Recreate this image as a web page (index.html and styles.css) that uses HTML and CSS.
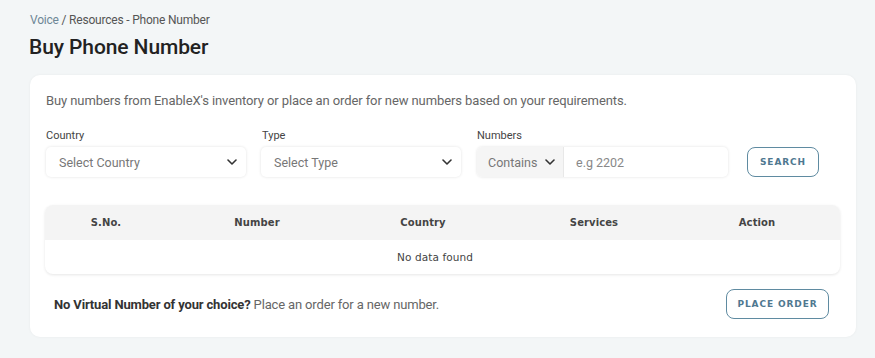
FILE: index.html
```html
<!DOCTYPE html>
<html>
<head>
<meta charset="utf-8">
<link rel="stylesheet" href="styles.css">
</head>
<body>
<div class="page">
  <div class="crumbs"><span class="crumb-link">Voice</span> / Resources - Phone Number</div>
  <h1 class="title">Buy Phone Number</h1>
  <div class="card">
    <p class="desc">Buy numbers from EnableX's inventory or place an order for new numbers based on your requirements.</p>
    <div class="filters">
      <div class="field">
        <label class="label">Country</label>
        <div class="select w200"><span>Select Country</span>
          <svg class="chev" viewBox="0 0 10 6" width="10" height="6"><path d="M1 1l4 4 4-4" fill="none" stroke="#333" stroke-width="1.6" stroke-linecap="round" stroke-linejoin="round"/></svg>
        </div>
      </div>
      <div class="field">
        <label class="label">Type</label>
        <div class="select w200"><span>Select Type</span>
          <svg class="chev" viewBox="0 0 10 6" width="10" height="6"><path d="M1 1l4 4 4-4" fill="none" stroke="#333" stroke-width="1.6" stroke-linecap="round" stroke-linejoin="round"/></svg>
        </div>
      </div>
      <div class="field">
        <label class="label">Numbers</label>
        <div class="numgroup">
          <div class="contains"><span>Contains</span>
            <svg class="chev" viewBox="0 0 10 6" width="10" height="6"><path d="M1 1l4 4 4-4" fill="none" stroke="#333" stroke-width="1.6" stroke-linecap="round" stroke-linejoin="round"/></svg>
          </div>
          <div class="numinput">e.g 2202</div>
        </div>
      </div>
      <button class="btn search">SEARCH</button>
    </div>
    <div class="table">
      <div class="thead">
        <div>S.No.</div><div>Number</div><div>Country</div><div>Services</div><div>Action</div><div></div>
      </div>
      <div class="tbody">No data found</div>
    </div>
    <div class="footer">
      <p class="note"><b>No Virtual Number of your choice?</b> Place an order for a new number.</p>
      <button class="btn order">PLACE ORDER</button>
    </div>
  </div>
</div>
</body>
</html>
```

FILE: styles.css
```css
* { box-sizing: border-box; }
html, body { margin: 0; padding: 0; }
body {
  background: #f3f6f7;
  font-family: Roboto, "Liberation Sans", sans-serif;
  color: #333;
  width: 875px;
  height: 358px;
  overflow: hidden;
}
.page { padding: 12px 19px 0 30px; }
.crumbs { font-size: 12px; color: #555; line-height: 16px; letter-spacing: -0.2px; }
.crumb-link { color: #6e8796; }
.title { margin: 6px 0 14px -1px; font-size: 21px; font-weight: 500; color: #222; line-height: 27px; letter-spacing: -0.1px; }
.card {
  background: #fff;
  border-radius: 10px;
  box-shadow: 0 0 3px rgba(0,0,0,0.05);
  width: 826px;
  height: 262px;
  padding: 18px 16px 0 16px;
}
.desc { margin: 0; font-size: 13px; color: #666; line-height: 16px; letter-spacing: -0.1px; }
.filters { display: flex; align-items: flex-end; margin-top: 20px; }
.field { display: flex; flex-direction: column; margin-right: 16px; }
.label { font-size: 11px; color: #444; line-height: 14px; margin-bottom: 4px; }
.select {
  height: 30px;
  border-radius: 5px;
  box-shadow: 0 0 3px rgba(0,0,0,0.12);
  display: flex; align-items: center; justify-content: space-between;
  padding: 0 9px 0 13px;
  font-size: 12.5px; color: #777;
}
.w200 { width: 200px; }
.field:nth-child(2) .select { margin-left: -1px; }
.numgroup {
  display: flex; width: 251px; height: 30px;
  border-radius: 5px;
  box-shadow: 0 0 3px rgba(0,0,0,0.12);
  overflow: hidden;
}
.contains {
  width: 87px; background: #f5f5f5;
  display: flex; align-items: center; justify-content: space-between;
  padding: 0 8px 0 11px;
  font-size: 12.5px; color: #777;
  border-right: 1px solid #e8e8e8;
}
.numinput { flex: 1; display: flex; align-items: center; padding-left: 12px; font-size: 12.5px; color: #888; }
.btn {
  background: #fff;
  border: 1.3px solid #5f8ba1;
  border-radius: 8px;
  color: #4f7890;
  font-family: "DejaVu Sans", sans-serif;
  font-size: 9px; font-weight: bold; letter-spacing: 0.9px;
  height: 30px;
  padding: 0;
}
.search { width: 72px; margin-left: 3px; }
.table {
  margin-top: 28px;
  margin-left: -1px;
  width: 795px;
  border-radius: 8px;
  box-shadow: 0 1px 3px rgba(0,0,0,0.10);
  overflow: hidden;
}
.thead {
  display: grid;
  grid-template-columns: 122px 180px 152px 190px 136px 1fr;
  height: 35px; align-items: center;
  background: #f4f4f4;
  font-family: "DejaVu Sans", sans-serif;
  font-size: 10px; font-weight: bold; color: #444; letter-spacing: 0.1px;
  text-align: center;
}
.tbody {
  width: 780px; height: 34px; line-height: 34px; text-align: center;
  font-family: "DejaVu Sans", sans-serif;
  font-size: 10.5px; color: #444; letter-spacing: 0.1px;
}
.footer { display: flex; align-items: center; justify-content: space-between; margin-top: 15px; padding-left: 8px; padding-right: 11px; }
.note { margin: 0; font-size: 13px; color: #666; letter-spacing: -0.15px; }
.note b { color: #333; font-weight: bold; }
.order { width: 103px; }
```
